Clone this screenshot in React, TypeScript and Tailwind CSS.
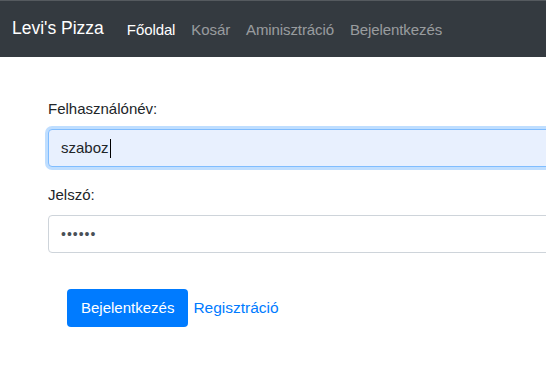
import React from 'react';

const links = [
  { label: 'Főoldal', active: true },
  { label: 'Kosár', active: false },
  { label: 'Aminisztráció', active: false },
  { label: 'Bejelentkezés', active: false },
];

function Navbar() {
  return (
    <nav className="h-[57px] bg-[#343a40] border-t border-[#555a5f] flex items-center px-[12px]">
      <span className="text-[17.5px] text-white mr-[15px] leading-none">Levi's Pizza</span>
      <ul className="flex items-center">
        {links.map((link) => (
          <li key={link.label}>
            <a
              href="#"
              className={`block px-[8px] text-[15px] tracking-[-0.1px] leading-none ${
                link.active ? 'text-white' : 'text-[#ffffff80]'
              }`}
            >
              {link.label}
            </a>
          </li>
        ))}
      </ul>
    </nav>
  );
}

export default function App() {
  return (
    <div
      className="min-h-screen w-full overflow-hidden bg-white text-[#212529]"
      style={{ fontFamily: '"Liberation Sans", Arial, sans-serif' }}
    >
      <Navbar />

      <main className="pt-[40px] pl-[48px]">
        {/* Username */}
        <div className="mb-[16px]">
          <label className="block text-[15px] leading-[24px] mb-[8px]">Felhasználónév:</label>
          <div className="w-[560px] h-[38px] flex items-center px-[12px] bg-[#e8f0fe] border border-[#80bdff] rounded-[4px] shadow-[0_0_0_3px_rgba(0,123,255,0.25)] text-[15px] text-[#212529]">
            szaboz
            <span className="inline-block w-px h-[19px] bg-black ml-px" />
          </div>
        </div>

        {/* Password */}
        <div className="mb-[16px]">
          <label className="block text-[15px] leading-[24px] mb-[8px]">Jelszó:</label>
          <div className="w-[560px] h-[38px] flex items-center px-[12px] bg-white border border-[#ced4da] rounded-[4px] text-[#495057]">
            <span className="text-[14px] tracking-[1px]">••••••</span>
          </div>
        </div>

        <div className="pt-[20px] pl-[19px] flex items-center">
          <button className="h-[38px] px-[14px] bg-[#007bff] text-white text-[15px] rounded-[4px]">
            Bejelentkezés
          </button>
          <a href="#" className="ml-[5px] text-[15.5px] text-[#007bff]">
            Regisztráció
          </a>
        </div>
      </main>
    </div>
  );
}
